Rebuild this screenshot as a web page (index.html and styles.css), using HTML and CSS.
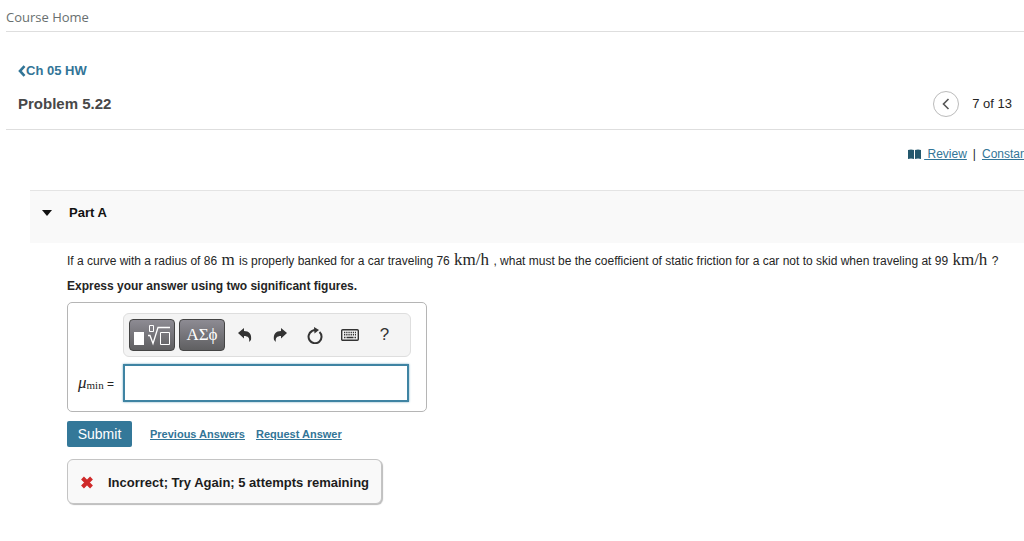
FILE: index.html
```html
<!DOCTYPE html>
<html lang="en">
<head>
<meta charset="utf-8">
<title>Problem 5.22</title>
<link rel="stylesheet" href="styles.css">
</head>
<body>
<nav class="topbar">Course Home</nav>
<header class="assignment">
  <a class="back" href="#"><svg width="8" height="12" viewBox="0 0 8 12"><path d="M6.500 1.200 2 6l4.500 4.800" fill="none" stroke="currentColor" stroke-width="2.600"/></svg>Ch 05 HW</a>
  <div class="title-row">
    <h1>Problem 5.22</h1>
    <div class="pager">
      <button class="prev" aria-label="Previous problem"><svg width="10" height="14" viewBox="0 0 10 14"><path d="M7.500 2 2.500 7l5 5" fill="none" stroke="currentColor" stroke-width="1.600"/></svg></button>
      <span>7 of 13</span>
    </div>
  </div>
</header>
<main>
  <div class="resources">
    <svg class="book" width="13" height="11" viewBox="0 0 13 11"><path d="M0 1Q3 0 6 1v9Q3 9 0 10zM7 1q3-1 6 0v9q-3-1-6 0z" fill="#24586d"/></svg>
    <a href="#">&nbsp;Review</a><span class="bar">|</span><a href="#">Constants</a>
  </div>
  <section class="part">
    <div class="part-head">
      <svg width="10" height="6" viewBox="0 0 10 6"><path d="M0 0h10L5 6z" fill="#111"/></svg>
      <h2>Part A</h2>
    </div>
    <div class="part-body">
      <p class="question">If a curve with a radius of 86 <span class="unit">m</span> is properly banked for a car traveling 76 <span class="unit">km/h</span> , what must be the coefficient of static friction for a car not to skid when traveling at 99 <span class="unit">km/h</span> ?</p>
      <p class="instruction">Express your answer using two significant figures.</p>
      <form>
        <div class="answer-box">
          <div class="toolbar">
            <button type="button" class="tool dark" aria-label="Templates"><svg width="36" height="22" viewBox="0 0 36 22"><path d="M0 8h10v13H0z" fill="#fff"/><g fill="none" stroke="#fff"><path d="M15.500 1.500h4v6h-4zM26.500 8.500h9v12h-9z"/><path d="M14 11.500h2l3 8L24 3.500h12" stroke-width="1.300"/></g></svg></button>
            <button type="button" class="tool dark symbols">ΑΣϕ</button>
            <button type="button" class="tool" aria-label="Undo"><svg width="14" height="14" viewBox="0 0 14 14"><path d="M0 5 6 0v3c5 0 8 3 7 9l-2 2c1-4-1-6-5-6v2.500z" fill="#333"/></svg></button>
            <button type="button" class="tool" aria-label="Redo"><svg width="14" height="14" viewBox="0 0 14 14"><path d="M14 5 8 0v3C3 3 0 6 1 12l2 2C2 10 4 8 8 8v2.500z" fill="#333"/></svg></button>
            <button type="button" class="tool" aria-label="Reset"><svg width="16" height="17" viewBox="0 0 16 17"><path d="M12.500 5A6.500 6.500 0 1 1 5 4Q6.500 3 9 3" fill="none" stroke="#333" stroke-width="2"/><path d="M7 0l5 3-4.500 3.500z" fill="#333"/></svg></button>
            <button type="button" class="tool" aria-label="Keyboard shortcuts"><svg width="18" height="12" viewBox="0 0 18 12"><rect x=".7" y=".7" width="16.600" height="10.600" rx="1" fill="none" stroke="#333" stroke-width="1.400"/><path d="M3 3.500h12M3 5.800h12" stroke="#333" stroke-width="1.400" stroke-dasharray="1.300 .9"/><path d="M3 8.500h1.500M5.500 8.500h7M13.500 8.500H15" stroke="#333" stroke-width="1.300"/></svg></button>
            <button type="button" class="tool help">?</button>
          </div>
          <label for="answer"><span class="mu">μ</span><span class="sub">min</span> =</label>
          <input id="answer" type="text">
        </div>
        <div class="actions">
          <button class="submit" type="submit">Submit</button>
          <a href="#">Previous Answers</a>
          <a href="#">Request Answer</a>
        </div>
      </form>
      <div class="feedback" role="status">
        <svg width="14" height="13" viewBox="0 0 14 13"><path d="M2.500 2 11.500 11M11.500 2 2.500 11" stroke="#cf2a2a" stroke-width="4"/></svg>
        Incorrect; Try Again; 5 attempts remaining
      </div>
    </div>
  </section>
</main>
</body>
</html>
```
FILE: styles.css
```css
* { box-sizing: border-box; }
body {
  margin: 0 0 0 6px;
  background: #fff;
  color: #252525;
  font: 12px/16px "Liberation Sans", Arial, sans-serif;
  overflow-x: hidden;
}
h1, h2, p { margin: 0; }
a { color: #327597; }
button { font-family: inherit; padding: 0; cursor: pointer; }
svg { display: block; flex: none; }
.topbar {
  height: 32px;
  padding-top: 8px;
  border-bottom: 1px solid #dedede;
  color: #696f6f;
  font: 13px/18px "Open Sans", "Noto Sans", sans-serif;
}
.assignment {
  padding: 31px 12px 12px;
  border-bottom: 1px solid #dedede;
}
.back {
  display: flex;
  width: fit-content;
  align-items: center;
  font-size: 13px;
  font-weight: bold;
  text-decoration: none;
}
.title-row {
  display: flex;
  justify-content: space-between;
  align-items: center;
  margin-top: 12px;
}
h1 { font-size: 15px; color: #484848; }
.pager { display: flex; align-items: center; gap: 13px; font-size: 13px; }
.prev {
  display: flex;
  align-items: center;
  justify-content: center;
  width: 26px;
  height: 26px;
  border: 1px solid #bbb;
  border-radius: 50%;
  background: #fff;
  color: #555;
}
.resources {
  display: flex;
  justify-content: flex-end;
  align-items: center;
  margin: 16px -12px 28px 0;
  white-space: nowrap;
}
.book { margin-right: 3px; }
.bar { margin: 0 6px; }
.part { margin-left: 24px; }
.part-head {
  display: flex;
  align-items: center;
  gap: 17px;
  height: 53px;
  padding: 0 12px 8px;
  border-top: 1px solid #e4e4e4;
  background: #f9f9f9;
}
h2 { font-size: 13px; color: #111; }
.part-body { padding: 8px 16px 24px 37px; }
.question { line-height: 20px; }
.unit { padding: 0 1px; font: 17px/16px "Liberation Serif", serif; }
.instruction { margin-top: 7px; font-weight: bold; }
.answer-box {
  display: grid;
  grid-template-columns: 45px 288px;
  row-gap: 7px;
  align-items: center;
  width: 360px;
  max-width: 100%;
  margin-top: 8px;
  padding: 10px 10px 9px;
  border: 1px solid #b5b5b5;
  border-radius: 5px;
}
.toolbar {
  grid-column: 2;
  display: flex;
  align-items: center;
  gap: 4px;
  height: 44px;
  padding: 0 5px;
  border: 1px solid #dedede;
  border-radius: 6px;
  background: #f4f4f4;
}
.tool {
  display: flex;
  align-items: center;
  justify-content: center;
  width: 31px;
  height: 32px;
  border: 0;
  background: none;
  color: #333;
}
.dark {
  flex: none;
  width: 46px;
  border: 1px solid #444;
  border-radius: 4px;
  background: linear-gradient(#8d8b93, #5f5f61);
  color: #fff;
}
.symbols { font: 17px/20px "Liberation Serif", "DejaVu Serif", serif; }
.help { font-size: 17px; }
label { white-space: nowrap; line-height: 18px; }
.mu { font: italic 17px/18px "Liberation Serif", serif; }
.sub { font: 11px/12px "Liberation Serif", serif; vertical-align: -1px; }
#answer {
  width: 286px;
  height: 38px;
  border: 2px solid #3f84a3;
  background: #fff;
  outline: 0;
  box-shadow: 0 0 2px #76aac0;
  font: inherit;
}
.actions {
  display: flex;
  align-items: center;
  gap: 11px;
  margin-top: 9px;
  font-size: 11px;
  font-weight: bold;
}
.submit {
  width: 65px;
  height: 26px;
  margin-right: 7px;
  border: 0;
  border-radius: 2px;
  background: #347899;
  color: #fff;
  font-size: 14px;
}
.feedback {
  display: flex;
  width: fit-content;
  align-items: center;
  gap: 14px;
  height: 45px;
  margin-top: 12px;
  padding: 2px 12px 0;
  border: 1px solid #c4c4c4;
  border-radius: 6px;
  background: #f9f9f9;
  box-shadow: 1px 1px 1px #bbb;
  font-size: 13px;
  font-weight: bold;
  color: #1c1c1c;
}
```
